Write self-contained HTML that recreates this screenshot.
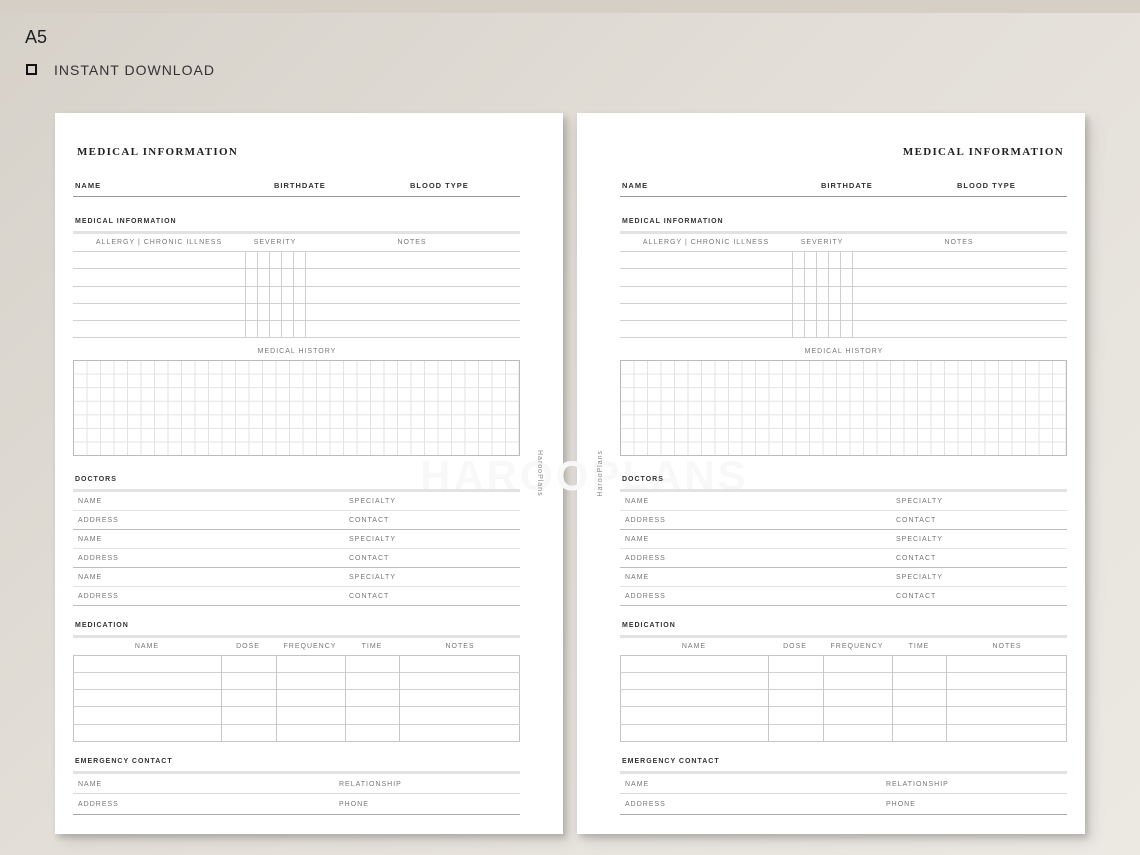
<!DOCTYPE html>
<html><head><meta charset="utf-8">
<style>
*{margin:0;padding:0;box-sizing:border-box}
body{width:1140px;height:855px;overflow:hidden;position:relative;font-family:"Liberation Sans",sans-serif;background:linear-gradient(135deg,#d6d1c9 0%,#e3dfd8 45%,#ece9e3 100%)}
.strip{position:absolute;left:0;top:0;width:1140px;height:13px;background:#d5cfc5}
.t{position:absolute;white-space:nowrap;line-height:1}
.page{position:absolute;top:113px;width:508px;height:721px;background:#fff;box-shadow:3px 4px 6px rgba(0,0,0,.18),8px 8px 14px rgba(0,0,0,.08)}
.l{position:absolute;height:1px;background:#c8c8c8}
.v{position:absolute;width:1px;background:#cfcfcf}
.lab{position:absolute;white-space:nowrap;line-height:1;font-size:7px;letter-spacing:1px;color:#777}
.hd{position:absolute;white-space:nowrap;line-height:1;font-size:7.5px;letter-spacing:1px;color:#333;font-weight:bold}
</style></head><body>
<div class="strip"></div>
<div class="t" style="left:25px;top:28px;font-size:18px;color:#222">A5</div>
<div style="position:absolute;left:26px;top:64px;width:11px;height:11px;border:2.5px solid #111"></div>
<div class="t" style="left:54px;top:63px;font-size:14px;letter-spacing:1px;color:#333">INSTANT DOWNLOAD</div>
<div class="page" style="left:55px"></div>
<div class="page" style="left:577px"></div>
<div class="t" style="left:420px;top:455px;font-size:42px;font-weight:bold;color:#f8f8f8;letter-spacing:3px">HAROOPLANS</div>
<div id="root"></div>
<script>
var h='';
function add(s){h+=s;}
function P(L,right){
 function x(v){return L+v;}
 var ts="top:147px;font-family:'Liberation Serif',serif;font-size:11px;letter-spacing:1.3px;color:#222;font-weight:bold";
 if(right) add('<div class="t" style="right:'+(1140-1064)+'px;'+ts+'">MEDICAL INFORMATION</div>');
 else add('<div class="t" style="left:'+x(4)+'px;'+ts+'">MEDICAL INFORMATION</div>');
 add('<div class="hd" style="left:'+x(2)+'px;top:182px">NAME</div>');
 add('<div class="hd" style="left:'+x(201)+'px;top:182px">BIRTHDATE</div>');
 add('<div class="hd" style="left:'+x(337)+'px;top:182px">BLOOD TYPE</div>');
 add('<div class="l" style="left:'+x(0)+'px;top:196px;width:447px;background:#999"></div>');
 function sec(t,y,ly){add('<div class="hd" style="left:'+x(2)+'px;top:'+(y-3)+'px;font-size:7px">'+t+'</div>');add('<div class="l" style="left:'+x(0)+'px;top:'+ly+'px;width:447px;height:3px;background:#e2e2e2"></div>');}
 function c(t,cx,y){add('<div class="lab" style="left:'+(x(cx)-100)+'px;width:200px;text-align:center;top:'+(y-3)+'px">'+t+'</div>');}
 sec('MEDICAL INFORMATION',221,231);
 c('ALLERGY | CHRONIC ILLNESS',86,242);c('SEVERITY',202,242);c('NOTES',339,242);
 [251,268,286,303,320,337].forEach(function(y){add('<div class="l" style="left:'+x(0)+'px;top:'+y+'px;width:447px;background:#d0d0d0"></div>');});
 [172,184,196,208,220,232].forEach(function(v){add('<div class="v" style="left:'+x(v)+'px;top:251px;height:86px"></div>');});
 c('MEDICAL HISTORY',224,351);
 add('<div style="position:absolute;left:'+x(0)+'px;top:360px;width:447px;height:96px;border:1px solid #bbb;background-image:linear-gradient(to right,#e3e3e3 1px,transparent 1px),linear-gradient(to bottom,#e3e3e3 1px,transparent 1px);background-size:13.5px 13.6px;background-position:-1px -1px"></div>');
 sec('DOCTORS',479,489);
 var rows=['NAME','ADDRESS','NAME','ADDRESS','NAME','ADDRESS'],rt=['SPECIALTY','CONTACT','SPECIALTY','CONTACT','SPECIALTY','CONTACT'];
 for(var i=0;i<6;i++){var y=501+i*19;add('<div class="lab" style="left:'+x(5)+'px;top:'+(y-3)+'px">'+rows[i]+'</div><div class="lab" style="left:'+x(276)+'px;top:'+(y-3)+'px">'+rt[i]+'</div>');
  add('<div class="l" style="left:'+x(0)+'px;top:'+(y+9)+'px;width:447px;'+(i%2?'background:#bdbdbd':'background:#e2e2e2')+'"></div>');}
 sec('MEDICATION',625,635);
 c('NAME',74,646);c('DOSE',175,646);c('FREQUENCY',237,646);c('TIME',299,646);c('NOTES',387,646);
 add('<div style="position:absolute;left:'+x(0)+'px;top:655px;width:447px;height:87px;border:1px solid #c4c4c4"></div>');
 [672,689,706,724].forEach(function(y){add('<div class="l" style="left:'+x(0)+'px;top:'+y+'px;width:447px;background:#d0d0d0"></div>');});
 [148,203,272,326].forEach(function(v){add('<div class="v" style="left:'+x(v)+'px;top:655px;height:87px;background:#c8c8c8"></div>');});
 sec('EMERGENCY CONTACT',761,771);
 add('<div class="lab" style="left:'+x(5)+'px;top:781px">NAME</div><div class="lab" style="left:'+x(266)+'px;top:781px">RELATIONSHIP</div>');
 add('<div class="l" style="left:'+x(0)+'px;top:793px;width:447px;background:#d8d8d8"></div>');
 add('<div class="lab" style="left:'+x(5)+'px;top:801px">ADDRESS</div><div class="lab" style="left:'+x(266)+'px;top:801px">PHONE</div>');
 add('<div class="l" style="left:'+x(0)+'px;top:814px;width:447px;background:#a8a8a8"></div>');
}
P(73,false);P(620,true);
add('<div class="t" style="left:536px;top:450px;font-size:7px;letter-spacing:1px;color:#888;writing-mode:vertical-rl">HarooPlans</div>');
add('<div class="t" style="left:597px;top:450px;font-size:7px;letter-spacing:1px;color:#888;writing-mode:vertical-rl;transform:rotate(180deg)">HarooPlans</div>');
document.getElementById('root').innerHTML=h;
</script>
</body></html>
